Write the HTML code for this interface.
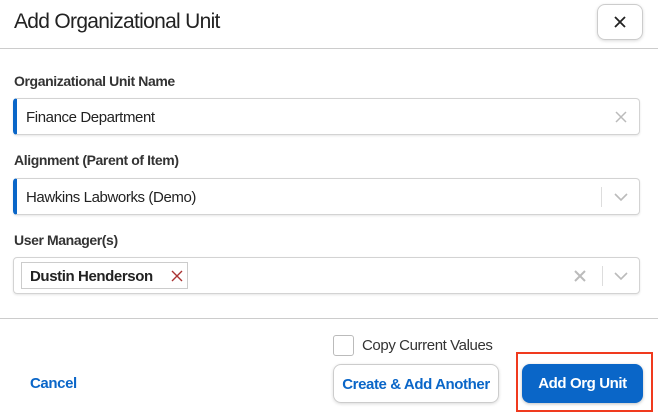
<!DOCTYPE html>
<html><head><style>
body{margin:0;width:658px;height:415px;background:#fff;font-family:"Liberation Sans",sans-serif;color:#222;position:relative;overflow:hidden}
.a{position:absolute}
.lbl{font-size:14px;color:#333;left:14px;letter-spacing:-0.4px;font-weight:600}
.inp{left:13px;width:627px;height:37px;border:1px solid #d3d3d3;border-radius:4px;box-sizing:border-box;box-shadow:0 1px 2px rgba(0,0,0,.1)}
.bar{border-left:4px solid #0a66c8}
.t{font-size:15px;letter-spacing:-0.4px;color:#222}
.sep{width:1px;height:20px;background:#ddd}
</style></head><body>
<div class="a" style="left:14px;top:10px;font-size:21px;letter-spacing:-0.7px;color:#222">Add Organizational Unit</div>
<div class="a" style="left:597px;top:4px;width:46px;height:36px;border:1px solid #ccc;border-radius:8px;box-sizing:border-box;box-shadow:0 1px 3px rgba(0,0,0,.15)">
<svg class="a" style="left:16px;top:11px" width="12" height="12"><path d="M1 1L11 11M11 1L1 11" stroke="#222" stroke-width="1.8"/></svg></div>
<div class="a" style="left:0;top:48px;width:658px;height:1px;background:#ccc"></div>

<div class="a lbl" style="top:73px">Organizational Unit Name</div>
<div class="a inp bar" style="top:98px"><div class="a t" style="left:9px;top:10px">Finance Department</div>
<svg class="a" style="left:598px;top:12px" width="12" height="12"><path d="M1 1L11 11M11 1L1 11" stroke="#bbb" stroke-width="1.5"/></svg></div>

<div class="a lbl" style="top:152px">Alignment (Parent of Item)</div>
<div class="a inp bar" style="top:178px"><div class="a t" style="left:9px;top:10px">Hawkins Labworks (Demo)</div>
<div class="a sep" style="left:584px;top:8px"></div>
<svg class="a" style="left:597px;top:14px" width="14" height="9"><path d="M1 1L7 7L13 1" stroke="#bbb" stroke-width="1.6" fill="none"/></svg></div>

<div class="a lbl" style="top:232px">User Manager(s)</div>
<div class="a inp" style="top:257px">
<div class="a" style="left:7px;top:4px;width:167px;height:27px;border:1px solid #ccc;box-sizing:border-box"></div>
<div class="a t" style="left:16px;top:10px;font-weight:600">Dustin Henderson</div>
<svg class="a" style="left:157px;top:12px" width="12" height="12"><path d="M1 1L11 11M11 1L1 11" stroke="#a33" stroke-width="1.4"/></svg>
<svg class="a" style="left:560px;top:12px" width="12" height="12"><path d="M1 1L11 11M11 1L1 11" stroke="#bbb" stroke-width="2"/></svg>
<div class="a sep" style="left:588px;top:8px"></div>
<svg class="a" style="left:600px;top:14px" width="14" height="9"><path d="M1 1L7 7L13 1" stroke="#bbb" stroke-width="1.6" fill="none"/></svg></div>

<div class="a" style="left:0;top:318px;width:658px;height:1px;background:#ccc"></div>
<div class="a" style="left:333px;top:335px;width:21px;height:21px;border:1px solid #bbb;border-radius:3px;box-sizing:border-box"></div>
<div class="a t" style="left:362px;top:337px;color:#333">Copy Current Values</div>
<div class="a" style="left:30px;top:375px;font-size:15px;font-weight:bold;color:#0a66c8;letter-spacing:-0.4px">Cancel</div>
<div class="a" style="left:333px;top:364px;width:166px;height:39px;border:1px solid #ccc;border-radius:8px;box-sizing:border-box;box-shadow:0 1px 3px rgba(0,0,0,.15);color:#0a66c8;font-size:15px;font-weight:bold;text-align:center;line-height:39px;letter-spacing:-0.4px">Create &amp; Add Another</div>
<div class="a" style="left:516px;top:352px;width:137px;height:60px;border:2px solid #f03a1e;box-sizing:border-box"></div>
<div class="a" style="left:522px;top:364px;width:121px;height:39px;background:#0a66c8;border-radius:8px;color:#fff;font-size:15px;font-weight:bold;text-align:center;line-height:40px;letter-spacing:-0.4px;box-shadow:0 1px 3px rgba(0,0,0,.25)">Add Org Unit</div>
</body></html>
